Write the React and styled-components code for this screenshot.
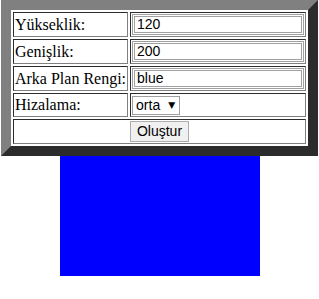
import React, { useState } from "react";
import styled, { createGlobalStyle } from "styled-components";

const GlobalStyle = createGlobalStyle`
  body {
    margin: 0;
    font-family: "Liberation Serif", "Times New Roman", serif;
    font-size: 16px;
    background: #fff;
  }
`;

const FormTable = styled.table`
  border: 10px outset gray;
  border-spacing: 2px;
  margin: 0 auto;
`;

const Cell = styled.td`
  border: 1px inset gray;
  padding: 1px;
  white-space: nowrap;
  text-align: ${(p) => (p.center ? "center" : "left")};
`;

const TextInput = styled.input`
  font-family: "Liberation Sans", Arial, sans-serif;
  font-size: 14px;
  line-height: 15px;
  height: 15px;
  padding: 0 2px;
  border: 3px double #a0a0a0;
  width: 162px;
  outline: none;
  color: #000;
`;

const SelectWrap = styled.span`
  position: relative;
  display: inline-block;
  vertical-align: middle;
`;

const Select = styled.select`
  display: block;
  appearance: none;
  font-family: "Liberation Sans", Arial, sans-serif;
  font-size: 14px;
  height: 19px;
  padding: 0 18px 0 3px;
  border: 1px solid #a0a0a0;
  border-radius: 0;
  background: #fff;
  color: #000;
  outline: none;
`;

const Arrow = styled.span`
  position: absolute;
  right: 5px;
  top: 5px;
  font-size: 9px;
  line-height: 9px;
  color: #000;
  pointer-events: none;
  font-family: "DejaVu Sans", sans-serif;
`;

const Button = styled.button`
  font-family: "Liberation Sans", Arial, sans-serif;
  font-size: 14px;
  height: 21px;
  padding: 0 6px;
  background: #f0f0f0;
  border: 1px solid #adadad;
  border-radius: 0;
  color: #000;
`;

const Box = styled.div`
  width: ${(p) => p.w}px;
  height: ${(p) => p.h}px;
  background: ${(p) => p.color};
  margin: ${(p) =>
    p.align === "sol" ? "0 auto 0 0" : p.align === "sag" ? "0 0 0 auto" : "0 auto"};
`;

export default function App() {
  const [height, setHeight] = useState("120");
  const [width, setWidth] = useState("200");
  const [color, setColor] = useState("blue");
  const [align, setAlign] = useState("orta");

  return (
    <>
      <GlobalStyle />
      <FormTable>
        <tbody>
          <tr>
            <Cell>Yükseklik:</Cell>
            <Cell>
              <TextInput value={height} onChange={(e) => setHeight(e.target.value)} />
            </Cell>
          </tr>
          <tr>
            <Cell>Genişlik:</Cell>
            <Cell>
              <TextInput value={width} onChange={(e) => setWidth(e.target.value)} />
            </Cell>
          </tr>
          <tr>
            <Cell>Arka Plan Rengi:</Cell>
            <Cell>
              <TextInput value={color} onChange={(e) => setColor(e.target.value)} />
            </Cell>
          </tr>
          <tr>
            <Cell>Hizalama:</Cell>
            <Cell>
              <SelectWrap>
                <Select value={align} onChange={(e) => setAlign(e.target.value)}>
                  <option value="sol">sol</option>
                  <option value="orta">orta</option>
                  <option value="sag">sağ</option>
                </Select>
                <Arrow>▼</Arrow>
              </SelectWrap>
            </Cell>
          </tr>
          <tr>
            <Cell colSpan={2} center>
              <Button>Oluştur</Button>
            </Cell>
          </tr>
        </tbody>
      </FormTable>
      <Box w={Number(width)} h={Number(height)} color={color} align={align} />
    </>
  );
}
